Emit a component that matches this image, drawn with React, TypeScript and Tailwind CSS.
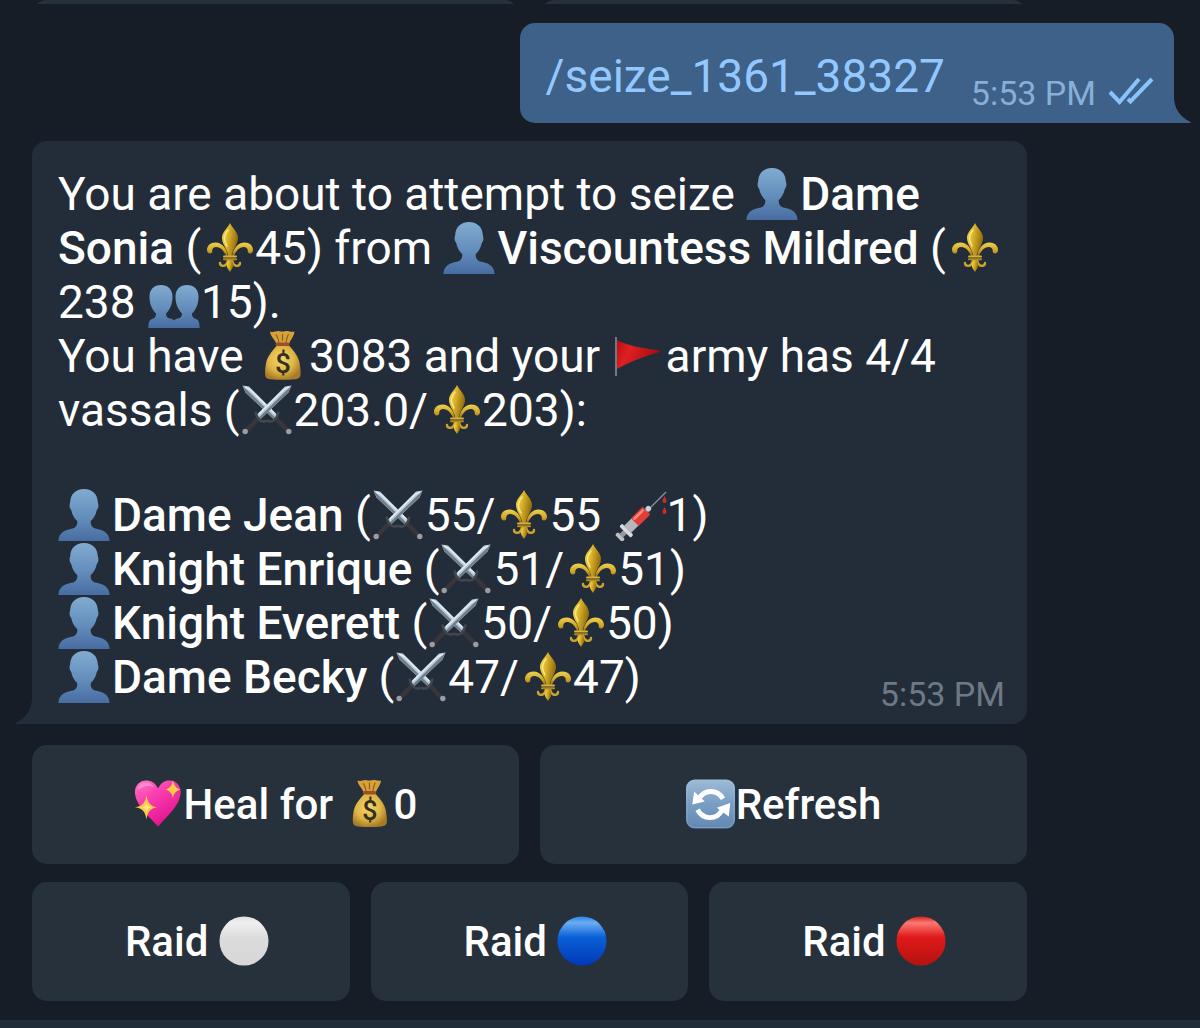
import type { ReactNode } from "react";

function Glyph({ small, label, children }: { small?: boolean; label: string; children: ReactNode }) {
  return (
    <svg
      role="img"
      aria-label={label}
      viewBox={small ? "0 0 52 52" : "-1 0 54 52"}
      className={small ? "inline-block size-[50px] align-[-10px]" : "inline-block h-[52px] w-[54px] align-[-10px]"}
    >
      {children}
    </svg>
  );
}

function Gradients() {
  return (
    <svg aria-hidden="true" className="absolute size-0">
      <defs>
        <linearGradient id="person" x1="0" y1="0" x2="0" y2="1">
          <stop offset="0" stopColor="#82abd1" />
          <stop offset="0.55" stopColor="#638dbb" />
          <stop offset="1" stopColor="#486ca2" />
        </linearGradient>
        <linearGradient id="gold" x1="0" y1="0" x2="1" y2="0.3">
          <stop offset="0" stopColor="#f3dc58" />
          <stop offset="0.45" stopColor="#dcb52c" />
          <stop offset="1" stopColor="#97700e" />
        </linearGradient>
        <linearGradient id="goldCurl" x1="0" y1="0" x2="0" y2="1">
          <stop offset="0" stopColor="#ecd24e" />
          <stop offset="0.6" stopColor="#cfa428" />
          <stop offset="1" stopColor="#96700e" />
        </linearGradient>
        <radialGradient id="bag" cx="0.45" cy="0.4" r="0.62">
          <stop offset="0" stopColor="#f5d66f" />
          <stop offset="0.6" stopColor="#dfb546" />
          <stop offset="1" stopColor="#a67a26" />
        </radialGradient>
        <linearGradient id="flag" x1="0" y1="0" x2="1" y2="0.3">
          <stop offset="0" stopColor="#b90d10" />
          <stop offset="0.35" stopColor="#de2022" />
          <stop offset="1" stopColor="#a80d10" />
        </linearGradient>
        <linearGradient id="heart" x1="0" y1="0" x2="0.6" y2="1">
          <stop offset="0" stopColor="#ff7cc4" />
          <stop offset="0.4" stopColor="#fb3fb0" />
          <stop offset="1" stopColor="#e0128f" />
        </linearGradient>
        <linearGradient id="tile" x1="0" y1="0" x2="0" y2="1">
          <stop offset="0" stopColor="#9cbbd6" />
          <stop offset="0.5" stopColor="#7a9ec3" />
          <stop offset="1" stopColor="#6288b3" />
        </linearGradient>
        <linearGradient id="white" x1="0" y1="0" x2="0" y2="1">
          <stop offset="0" stopColor="#dddddf" />
          <stop offset="0.12" stopColor="#f0f0f1" />
          <stop offset="0.45" stopColor="#dbdbdc" />
          <stop offset="1" stopColor="#d8d7d8" />
        </linearGradient>
        <linearGradient id="blue" x1="0" y1="0" x2="0" y2="1">
          <stop offset="0" stopColor="#2a86e8" />
          <stop offset="0.13" stopColor="#6aaef3" />
          <stop offset="0.42" stopColor="#0a60d6" />
          <stop offset="1" stopColor="#0039b8" />
        </linearGradient>
        <linearGradient id="red" x1="0" y1="0" x2="0" y2="1">
          <stop offset="0" stopColor="#d81e1c" />
          <stop offset="0.13" stopColor="#fb7a72" />
          <stop offset="0.42" stopColor="#e0191a" />
          <stop offset="1" stopColor="#b3130f" />
        </linearGradient>
      </defs>
    </svg>
  );
}

function Person() {
  return (
    <Glyph label="person">
      <path
        fill="url(#person)"
        d="M25 0c8.500 0 13.500 5.500 13.800 13 .1 1.200.8 1.800.6 4-.2 2.300-1 3-1.600 4-1 5-3.300 8.500-6 11-.5 3 .7 6.500 4.200 7.600C43 41 50 42.500 50.600 52H-.6C0 42.500 7 41 14 39.600c3.500-1.100 4.700-4.600 4.200-7.600-2.700-2.500-5-6-6-11-.6-1-1.400-1.700-1.600-4-.2-2.200.5-2.800.6-4C11.500 5.500 16.500 0 25 0z"
      />
    </Glyph>
  );
}

function People() {
  const half =
    "M13 9c7 0 11.300 4.500 11.500 11 .1 3.500-.4 7-1.800 10.500-1 2.500-2.700 5-4.700 7 0 3 1.500 4.500 4 5 2 .4 4 1 4.500 3V52H.4c0-5 .8-8.200 3.600-9 3-.7 4.200-2.500 4-5.500-2-2-3.700-4.500-4.700-7C1.900 27 1.400 23.500 1.500 20 1.700 13.500 6 9 13 9z";
  return (
    <Glyph label="people">
      <path fill="url(#person)" d={half} />
      <path fill="url(#person)" transform="translate(52 0) scale(-1 1)" d={half} />
    </Glyph>
  );
}

function Fleur() {
  const side =
    "M24 34C22.500 26 18 20.500 11.500 20.500 6.500 20.500 3 23.800 3 27.600c0 2.700 1.500 4.200 3.400 3.900 1.500-.2 2.100-1.400 1.800-2.900.2-2.300 1.700-3.500 4-3.500 4.300 0 8 3.900 9.800 8.900z";
  const foot = "M24 38c-1 4.500-3.300 6.200-5.600 5.800-1.500-.3-2.400-1.300-2.400-2.800";
  return (
    <Glyph label="fleur-de-lis">
      <g transform="translate(2 0)">
        <g fill="url(#goldCurl)">
          <path d={side} />
          <path transform="translate(52 0) scale(-1 1)" d={side} />
        </g>
        <g fill="none" stroke="#cba42f" strokeWidth="2.400" strokeLinecap="round">
          <path d={foot} />
          <path transform="translate(52 0) scale(-1 1)" d={foot} />
        </g>
        <path fill="url(#gold)" d="M26 1c2.500 5.500 8 9 8 15C34 22.500 28.500 27 27.600 34h-3.200C23.500 27 18 22.500 18 16 18 10 23.500 6.500 26 1z" />
        <path fill="url(#gold)" d="M24.200 37h3.600c.4 3.500 2 4.500 1.300 7.500-.5 2-2.100 3.500-3.100 5.500-1-2-2.600-3.500-3.100-5.500-.7-3 .9-4 1.300-7.500z" />
        <rect x="19" y="33.500" width="14" height="2" rx="1" fill="#d7b136" />
        <rect x="19" y="36.300" width="14" height="2" rx="1" fill="#b38a1c" />
        <path d="M24 8c-2 2.800-3.500 5-3.500 8.500 0 3 1.300 5 2.500 7.500" fill="none" stroke="#f8e987" strokeWidth="1.400" strokeLinecap="round" />
      </g>
    </Glyph>
  );
}

function MoneyBag({ small }: { small?: boolean }) {
  return (
    <Glyph small={small} label="money">
      <path
        fill="url(#bag)"
        d="M21 15.500h12c3.500 4 9 9.500 10.500 17 .5 3 1.500 9.500 1 12.500-.6 3.500-3 4-6 4.300-6 .7-17 .7-24 0-3-.3-5-1.300-5.300-4.300-.3-3 .3-9.500 1-12.500C12 25 17.500 19.500 21 15.500z"
      />
      <path fill="#d6a03a" d="M14 1.500c4 1.500 6-1 9.500-.3 2.500.5 3 .5 5.500 0 3.500-.8 5.500 1.300 9.500.3-.5 5-4 8-5.500 12.500H20.500C19 9.500 14.500 6.500 14 1.500z" />
      <path fill="none" stroke="#8d5f16" strokeWidth="1.200" d="M20 4.500c1.500 2.500 2.500 5 3 8M32.500 4c-1.500 3-2 5.500-2.500 8.500M26.500 4v7" />
      <rect x="19.500" y="12.500" width="14" height="3.500" rx="1.700" fill="#9d4f2a" />
      <text x="27" y="43" textAnchor="middle" className="fill-[#35311f] font-['Roboto'] text-[28px] font-medium">
        $
      </text>
    </Glyph>
  );
}

function Flag() {
  return (
    <Glyph label="red flag">
      <path d="M3 7v39" stroke="#848d98" strokeWidth="1.600" />
      <path fill="url(#flag)" d="M4 10c10 5.500 24 8 42.500 10.500v1.500C34 25.500 17 31.500 4 39z" />
    </Glyph>
  );
}

function Swords() {
  const blade = (
    <>
      <path d="M1.500 1.500l6.500 1L36.500 31l-4 4L4.500 8.500z" fill="#b9c8d4" />
      <path d="M1.500 1.500l3 7 28 26.500 1.600-1.600z" fill="#6f7e8c" />
      <path d="M4 3l5 2.500L34 30" fill="none" stroke="#e3eef6" strokeWidth="1.500" />
      <path d="M35 34.500l11.500 12" stroke="#38363a" strokeWidth="4.500" />
      <path d="M27 37c3 1.200 5 .3 6.500-1.200s3.500-3.800 3.800-7.300" fill="none" stroke="#43474d" strokeWidth="2.600" strokeLinecap="round" />
      <circle cx="47.800" cy="47.500" r="2.700" fill="#9a9da3" />
    </>
  );
  return (
    <Glyph label="swords">
      <g>{blade}</g>
      <g transform="translate(52 0) scale(-1 1)">{blade}</g>
    </Glyph>
  );
}

function Syringe() {
  return (
    <Glyph label="syringe">
      <g transform="translate(2 0)">
        <path d="M34 19L50 3" stroke="#89929b" strokeWidth="1.300" />
        <g transform="translate(4 48) rotate(-45)">
          <rect x="-2" y="-5" width="4" height="10" rx="1.500" fill="#bfc1c4" />
          <rect x="1.500" y="-2.500" width="7" height="5" fill="#94979c" />
          <rect x="7" y="-8" width="4" height="16" rx="1.500" fill="#d8dadc" />
          <rect x="10.500" y="-5" width="11" height="10" fill="#b4b7bb" />
          <rect x="21" y="-5.500" width="16.500" height="11" rx="1.500" fill="#df3f38" />
          <rect x="22" y="-4" width="14" height="2.500" rx="1" fill="#f98b80" />
          <circle cx="40" cy="0" r="2.800" fill="#c9d2d8" />
        </g>
        <path d="M48.500 7c1.300 2.500 2 3.800 2 5a2 2 0 0 1-4 0c0-1.200.7-2.500 2-5zM48.500 18c1.300 2.500 2 3.800 2 5a2 2 0 0 1-4 0c0-1.200.7-2.500 2-5z" fill="#cf2a26" />
      </g>
    </Glyph>
  );
}

function SparkleHeart() {
  return (
    <Glyph small label="sparkling heart">
      <path
        fill="url(#heart)"
        d="M25 10C27.500 4 32 1.500 37 1.500c6.500 0 11.500 5 11.500 12C48.500 27 34 39 25 49.500 16 39 1 27 1 13.500c0-7 5-12 11.500-12C18 1.500 22.500 4 25 10z"
      />
      <path fill="#ff9dd6" opacity="0.7" d="M4 12c0-5 4-8.300 8.500-8.300 3.500 0 6.500 1.800 8.500 5-5-2.500-12-2-17 3.300z" />
      <path fill="#fdcb4a" d="M13 17c1.500 8.500 4 11 11 12.500-7 1.500-9.500 4-11 12.500-1.500-8.500-4-11-12-12.500C9 28 11.500 25.500 13 17z" />
      <path fill="#fdcb4a" d="M40.500 1c1.200 6 3 8.500 8 10-5 1.500-6.800 3.500-8 9-1.200-5.500-3-7.500-8-9 5-1.500 6.800-4 8-10z" />
      <path fill="#ffe88a" d="M13 24.500c.8 3.500 2 4.500 5 5-3 .5-4.200 1.500-5 5-.8-3.500-2-4.500-5-5 3-.5 4.200-1.500 5-5z" />
    </Glyph>
  );
}

function RefreshTile() {
  return (
    <Glyph small label="refresh">
      <rect x="0" y="0.500" width="51" height="51" rx="9" fill="url(#tile)" />
      <rect x="1" y="1.500" width="49" height="49" rx="8" fill="none" stroke="#b4cce0" strokeWidth="1" opacity="0.3" />
      <g fill="none" stroke="#fff" strokeWidth="5">
        <path d="M13.500 20.500C19 11 32 10 38.500 20.500" />
        <path d="M12 32c6 11 20 11 26-.5" />
      </g>
      <path fill="#fff" d="M8.500 13l-2 13.500 13-3zM44.500 39l1.500-14-14 5z" />
    </Glyph>
  );
}

function Disc({ fill }: { fill: "white" | "blue" | "red" }) {
  const paint = { white: "url(#white)", blue: "url(#blue)", red: "url(#red)" }[fill];
  return (
    <Glyph small label={`${fill} circle`}>
      <circle cx="26" cy="26" r="25.500" fill={paint} />
    </Glyph>
  );
}

function KeyButton({ children }: { children: ReactNode }) {
  return (
    <button type="button" className="h-[119px] rounded-[15px] bg-[#26313c] text-[42px] font-medium whitespace-nowrap text-white">
      {children}
    </button>
  );
}

function RaidButton({ fill }: { fill: "white" | "blue" | "red" }) {
  return (
    <button type="button" className="h-[119px] rounded-[15px] bg-[#26313c] pl-3 text-[42px] font-medium whitespace-nowrap text-white">
      Raid <Disc fill={fill} />
    </button>
  );
}

const vassals = [
  { name: "Dame Jean", power: 55, wounded: 1 },
  { name: "Knight Enrique", power: 51, wounded: 0 },
  { name: "Knight Everett", power: 50, wounded: 0 },
  { name: "Dame Becky", power: 47, wounded: 0 },
];

export default function App() {
  return (
    <div className="flex min-h-screen flex-col overflow-hidden bg-[#161d27] font-['Roboto',sans-serif] text-white">
      <Gradients />
      <main className="flex grow flex-col">
        <div className="mr-[173px] ml-8 grid h-1 grid-cols-2 items-end gap-[21px] overflow-hidden">
          <div className="h-8 rounded-[15px] bg-[#26313c]" />
          <div className="h-8 rounded-[15px] bg-[#26313c]" />
        </div>

        <div className="relative mt-[19px] mr-[26px] flex items-end self-end rounded-[15px] rounded-br-none bg-[#3e6189] pt-[26px] pr-[20px] pb-[10px] pl-[26px]">
          <a href="#seize" className="mb-[10px] text-[46px] leading-[54px] text-[#92c8ff]">
            /seize_1361_38327
          </a>
          <span className="ml-[26px] text-[34px] leading-[40px] text-[#86b0d8]">5:53 PM</span>
          <svg aria-label="read" role="img" viewBox="0 0 46 28" className="mb-[8px] ml-[12px] h-[28px] w-[46px]">
            <path d="M2 15l9.500 10L31 2M20 22l2.500 2.500L44 2" fill="none" stroke="#86c4fb" strokeWidth="4" />
          </svg>
          <svg aria-hidden="true" viewBox="0 0 17 26" className="absolute bottom-0 left-full h-[26px] w-[17px]">
            <path d="M0 0c0 11 6 20 16.500 25 .5.500.5 1 0 1H0z" fill="#3e6189" />
          </svg>
        </div>

        <div className="relative mt-[18px] mr-[173px] ml-8 rounded-[15px] rounded-bl-none bg-[#232d39] pt-[26px] pr-[22px] pb-[10px] pl-[26px]">
          <p className="text-[46px] leading-[54px]">
            You are about to attempt to seize <Person />
            <b className="font-medium">Dame Sonia</b> (<Fleur />
            45) from <Person />
            <b className="font-medium">Viscountess Mildred</b> (<Fleur />
            238 <People />
            15).
            <br />
            You have <MoneyBag />
            3083 and your <Flag />
            army has 4/4 vassals (<Swords />
            203.0/
            <Fleur />
            203):
          </p>
          <div className="mt-[51px] flex items-end justify-between">
            <ul className="mb-[10px] text-[46px] leading-[54px]">
              {vassals.map((v) => (
                <li key={v.name}>
                  <Person />
                  <b className="font-medium">{v.name}</b> (<Swords />
                  {v.power}/<Fleur />
                  {v.power}
                  {v.wounded > 0 && (
                    <>
                      {" "}
                      <Syringe />
                      {v.wounded}
                    </>
                  )}
                  )
                </li>
              ))}
            </ul>
            <span className="text-[34px] leading-[40px] text-[#6d7985]">5:53 PM</span>
          </div>
          <svg aria-hidden="true" viewBox="0 0 17 26" className="absolute right-full bottom-0 h-[26px] w-[17px]">
            <path d="M17 0C17 11 11 20 .5 25c-.5.500-.5 1 0 1H17z" fill="#232d39" />
          </svg>
        </div>

        <div className="mt-[21px] mr-[173px] mb-[19px] ml-8 flex flex-col gap-[18px]">
          <div className="grid grid-cols-2 gap-[21px]">
            <KeyButton>
              <SparkleHeart />
              Heal for <MoneyBag small />0
            </KeyButton>
            <KeyButton>
              <RefreshTile />
              Refresh
            </KeyButton>
          </div>
          <div className="grid grid-cols-3 gap-[21px]">
            <RaidButton fill="white" />
            <RaidButton fill="blue" />
            <RaidButton fill="red" />
          </div>
        </div>
      </main>
      <footer className="h-2 bg-[#202c38]" />
    </div>
  );
}
